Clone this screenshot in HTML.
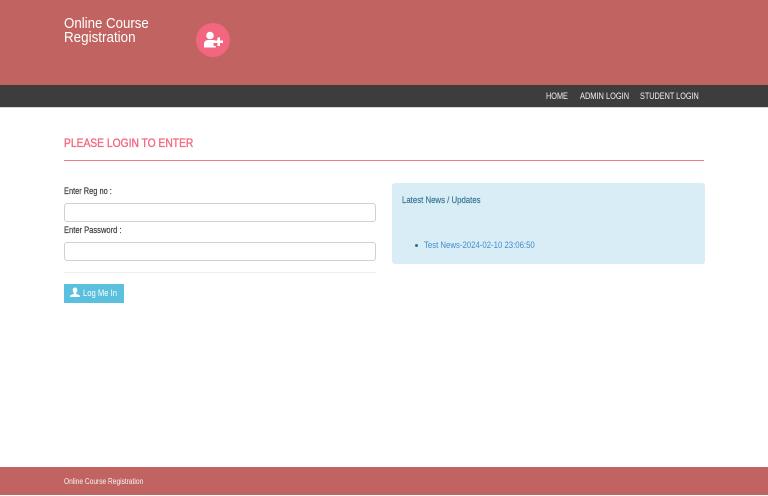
<!DOCTYPE html>
<html>
<head>
<meta charset="utf-8">
<style>
html,body{margin:0;padding:0;background:#fff;width:768px;height:496px;overflow:hidden;font-family:"Liberation Sans",sans-serif}
.a{position:absolute;white-space:nowrap}
.t{transform-origin:0 50%}
#page{position:relative;width:768px;height:496px;overflow:hidden;filter:blur(.3px)}
</style>
</head>
<body>
<div id="page">
<div class="a" style="left:0;top:0;width:768px;height:85px;background:#c06361"></div>
<div class="a" style="left:0;top:85px;width:768px;height:22px;background:#3d3d3d"></div>
<div class="a" style="left:0;top:107px;width:768px;height:1px;background:#d8d8d8"></div>

<div class="a t" style="left:63.500px;top:16px;font-size:14.500px;line-height:16px;color:#fff;transform:scaleX(.915)">Online Course</div>
<div class="a t" style="left:63.500px;top:29.500px;font-size:14.500px;line-height:16px;color:#fff;transform:scaleX(.925)">Registration</div>
<div class="a" style="left:195.500px;top:23px;width:34px;height:34px;border-radius:50%;background:#f2677f"></div>
<svg class="a" style="left:196px;top:23px" width="34" height="34" viewBox="0 0 34 34">
<circle cx="14" cy="12.500" r="3.800" fill="#fff"/>
<path d="M8 24.500v-3c0-3 2-4.500 4-4.500h5c1 0 2 .3 2.800 .9v2.100h-2.300v3h2.300v1.500z" fill="#fff"/>
<path d="M21.500 14.500h2.500v3h3v2.500h-3v3h-2.500v-3h-3v-2.500h3z" fill="#fff"/>
</svg>

<div class="a t" style="left:546px;top:91px;font-size:9.200px;line-height:11px;color:#f2f2f2;transform:scaleX(.795)">HOME</div>
<div class="a t" style="left:580px;top:91px;font-size:9.200px;line-height:11px;color:#f2f2f2;transform:scaleX(.808)">ADMIN LOGIN</div>
<div class="a t" style="left:640px;top:91px;font-size:9.200px;line-height:11px;color:#f2f2f2;transform:scaleX(.79)">STUDENT LOGIN</div>

<div class="a t" style="left:63.500px;top:136px;font-size:12px;line-height:14px;color:#f2677f;-webkit-text-stroke:.35px #f2677f;transform:scaleX(.857)">PLEASE LOGIN TO ENTER</div>
<div class="a" style="left:63.500px;top:160px;width:640.500px;height:1px;background:#f5788c"></div>

<div class="a t" style="left:63.500px;top:186px;font-size:9.200px;line-height:11px;color:#333;-webkit-text-stroke:.15px #333;transform:scaleX(.808)">Enter Reg no :</div>
<div class="a" style="left:63.500px;top:203px;width:310.500px;height:17px;border:1px solid #d0d0d0;border-radius:3px;background:#fff"></div>
<div class="a t" style="left:63.500px;top:225px;font-size:9.200px;line-height:11px;color:#333;-webkit-text-stroke:.15px #333;transform:scaleX(.822)">Enter Password :</div>
<div class="a" style="left:63.500px;top:242px;width:310.500px;height:17px;border:1px solid #d0d0d0;border-radius:3px;background:#fff"></div>
<div class="a" style="left:63.500px;top:272px;width:312.500px;height:1px;background:#eee"></div>

<div class="a" style="left:63.500px;top:284px;width:60.500px;height:19px;background:#5bc0de"></div>
<svg class="a" style="left:70px;top:287px" width="10" height="11" viewBox="0 0 10 11">
<path d="M5 .5c1.500 0 2.300 1.100 2.300 2.600 0 1.200-.6 2.200-1.200 2.700v.9l3 1.300c.5 .2 .7 .6 .7 1v1H.2V9c0-.4 .2-.8 .7-1l3-1.300v-.9C3.300 5.300 2.700 4.300 2.700 3.100 2.700 1.600 3.500 .5 5 .5z" fill="#fff"/>
</svg>
<div class="a t" style="left:83px;top:288px;font-size:9.200px;line-height:11px;color:#fff;transform:scaleX(.832)">Log Me In</div>

<div class="a" style="left:392px;top:183px;width:312.500px;height:81px;background:#d9edf7;border-radius:3px"></div>
<div class="a t" style="left:401.500px;top:195px;font-size:9.200px;line-height:11px;color:#31708f;-webkit-text-stroke:.15px #31708f;transform:scaleX(.85)">Latest News / Updates</div>
<div class="a" style="left:415px;top:244px;width:3px;height:3px;border-radius:50%;background:#31708f"></div>
<div class="a t" style="left:424px;top:240px;font-size:9.200px;line-height:11px;color:#428bca;transform:scaleX(.847)">Test News-2024-02-10 23:06:50</div>

<div class="a" style="left:0;top:467px;width:768px;height:28px;background:#c06361"></div>
<div class="a t" style="left:63.500px;top:476.500px;font-size:8px;line-height:10px;color:#f5f5f5;transform:scaleX(.825)">Online Course Registration</div>
</div>
</body>
</html>
